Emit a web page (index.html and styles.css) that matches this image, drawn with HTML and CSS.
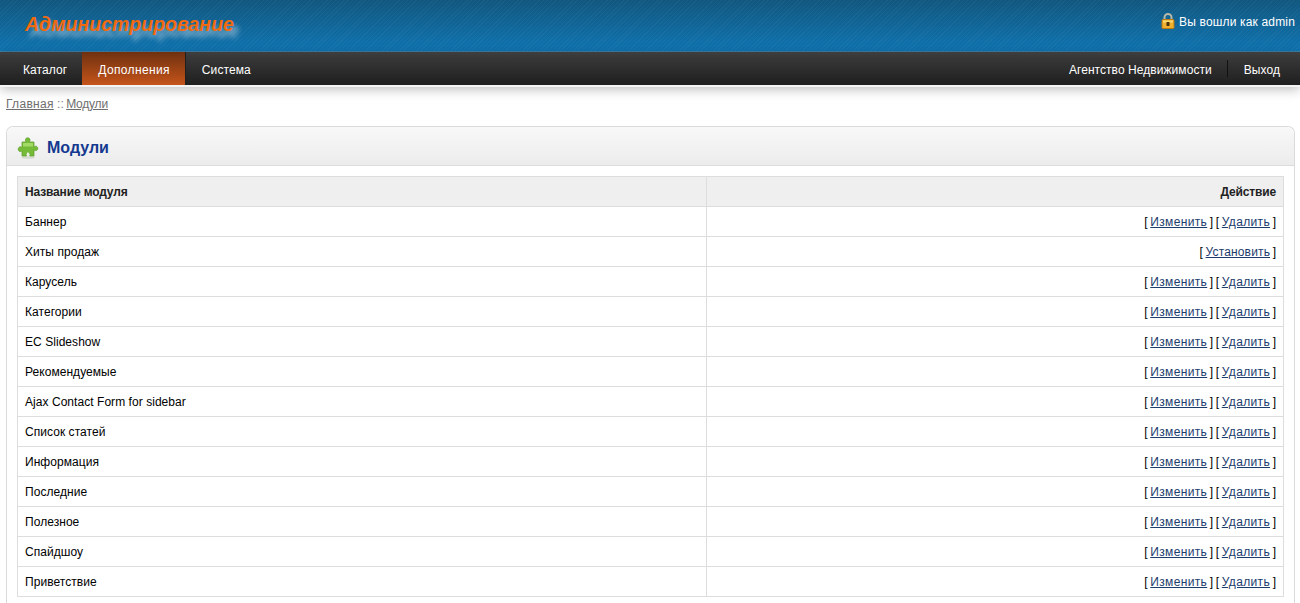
FILE: index.html
```html
<!DOCTYPE html>
<html lang="ru">
<head>
  <meta charset="UTF-8">
  <title>Модули</title>
  <link rel="stylesheet" href="styles.css">
</head>
<body>
  <div class="header">
    <div class="logo">Администрирование</div>
    <div class="logged">
      <svg class="lock" width="14" height="16" viewBox="0 0 14 16">
        <path d="M3.500 7V4.500a3.500 3.500 0 0 1 7 0V7" fill="none" stroke="#b9b9a8" stroke-width="2"/>
        <rect x="1" y="6.500" width="12" height="9" rx="1" fill="#f0b030" stroke="#b97a10"/>
        <rect x="2" y="7.500" width="10" height="2" fill="#f9d873"/>
        <rect x="5.500" y="9" width="3" height="4" fill="#4a3208"/>
      </svg>
      Вы вошли как admin
    </div>
  </div>

  <div class="menu">
    <ul class="menu-left">
      <li>Каталог</li>
      <li class="selected">Дополнения</li>
      <li>Система</li>
    </ul>
    <ul class="menu-right">
      <li>Агентство Недвижимости</li>
      <li>Выход</li>
    </ul>
  </div>

  <div class="content">
    <div class="breadcrumb"><a href="#">Главная</a> :: <a href="#">Модули</a></div>

    <div class="box">
      <div class="heading">
        <svg class="puzzle" width="22" height="22" viewBox="0 0 22 22">
          <ellipse cx="11" cy="20.500" rx="7" ry="1.300" fill="#d5dbd0"/>
          <path d="M5 5h3.800c.3 0-.4-.7-.4-1.800C8.400 1.500 9.500.8 10.700.8s2.300.7 2.300 2.400c0 1.100-.7 1.800-.4 1.800H17v4.600c0 .3.700-.4 1.700-.4 1.100 0 2.100.9 2.100 2.200s-1 2.200-2.100 2.200c-1 0-1.700-.7-1.700-.4V19h-4.300c-.3 0 .4-.6.400-1.500 0-1.100-.9-1.700-2-1.700s-2 .6-2 1.700c0 .9.700 1.500.4 1.500H5v-4.800c0-.3-.7.400-1.700.4C2.200 14.600 1.200 13.500 1.200 12.200s1-2.400 2.100-2.400c1 0 1.700.7 1.700.4z" fill="#75bb38" stroke="#5d9d2a" stroke-width=".7"/>
          <path d="M6 6h10v3.500H6z" fill="#a3da68"/>
          <path d="M10 15.500h1.600V19H10z" fill="#e8f3dc"/>
        </svg>
        <h1>Модули</h1>
      </div>
      <div class="box-content">
        <table class="list">
          <thead>
            <tr><th class="left">Название модуля</th><th class="right">Действие</th></tr>
          </thead>
          <tbody>
            <tr><td class="left">Баннер</td><td class="right">[ <a href="#">Изменить</a> ] [ <a href="#">Удалить</a> ]</td></tr>
            <tr><td class="left">Хиты продаж</td><td class="right">[ <a class="install" href="#">Установить</a> ]</td></tr>
            <tr><td class="left">Карусель</td><td class="right">[ <a href="#">Изменить</a> ] [ <a href="#">Удалить</a> ]</td></tr>
            <tr><td class="left">Категории</td><td class="right">[ <a href="#">Изменить</a> ] [ <a href="#">Удалить</a> ]</td></tr>
            <tr><td class="left">EC Slideshow</td><td class="right">[ <a href="#">Изменить</a> ] [ <a href="#">Удалить</a> ]</td></tr>
            <tr><td class="left">Рекомендуемые</td><td class="right">[ <a href="#">Изменить</a> ] [ <a href="#">Удалить</a> ]</td></tr>
            <tr><td class="left">Ajax Contact Form for sidebar</td><td class="right">[ <a href="#">Изменить</a> ] [ <a href="#">Удалить</a> ]</td></tr>
            <tr><td class="left">Список статей</td><td class="right">[ <a href="#">Изменить</a> ] [ <a href="#">Удалить</a> ]</td></tr>
            <tr><td class="left">Информация</td><td class="right">[ <a href="#">Изменить</a> ] [ <a href="#">Удалить</a> ]</td></tr>
            <tr><td class="left">Последние</td><td class="right">[ <a href="#">Изменить</a> ] [ <a href="#">Удалить</a> ]</td></tr>
            <tr><td class="left">Полезное</td><td class="right">[ <a href="#">Изменить</a> ] [ <a href="#">Удалить</a> ]</td></tr>
            <tr><td class="left">Спайдшоу</td><td class="right">[ <a href="#">Изменить</a> ] [ <a href="#">Удалить</a> ]</td></tr>
            <tr><td class="left">Приветствие</td><td class="right">[ <a href="#">Изменить</a> ] [ <a href="#">Удалить</a> ]</td></tr>
          </tbody>
        </table>
      </div>
    </div>
  </div>
</body>
</html>
```

FILE: styles.css
```css
html {
  overflow: hidden;
}

body {
  margin: 0;
  padding: 0;
  height: 603px;
  overflow: hidden;
  background: #fff;
  font-family: "Liberation Sans", Arial, sans-serif;
  font-size: 12px;
  color: #000;
}

.header {
  height: 52px;
  box-sizing: border-box;
  padding: 0 5px 0 25px;
  display: flex;
  align-items: center;
  justify-content: space-between;
  background:
    repeating-linear-gradient(135deg, rgba(255, 255, 255, 0.035) 0, rgba(255, 255, 255, 0.035) 1px, transparent 1px, transparent 3px),
    linear-gradient(to bottom, #11577f, #0f74b1);
  border-bottom: 1px solid #3f7fa6;
}

.logo {
  margin-top: -3px;
  font-size: 19.5px;
  font-weight: bold;
  font-style: italic;
  color: #f26a10;
  text-shadow: 5px 6px 5px rgba(255, 255, 255, 0.5);
}

.logged {
  margin-top: -8px;
  display: flex;
  align-items: center;
  gap: 4px;
  color: #fff;
  letter-spacing: 0.16px;
}

.lock {
  margin-top: -2px;
}

.menu {
  height: 33px;
  display: flex;
  justify-content: space-between;
  background: linear-gradient(to bottom, #3d3d3d 0, #3d3d3d 2px, #3a3a3a 3px, #1f1f1f 100%);
  border-bottom: 2px solid #f4f4f4;
  box-shadow: 0 2px 12px rgba(0, 0, 0, 0.28);
}

.menu ul {
  display: flex;
  margin: 0;
  padding: 0;
  list-style: none;
}

.menu .menu-left {
  padding-left: 7px;
}

.menu li {
  height: 33px;
  padding: 0 14px 0 16px;
  line-height: 36px;
  color: #fff;
  letter-spacing: 0.1px;
}

.menu li.selected {
  padding: 0 15px 0 16px;
  border-right: 1px solid #1f1f1f;
  background: linear-gradient(to bottom, #6f3110, #c5541a);
  letter-spacing: 0.35px;
}

.menu .menu-left li:first-child {
  padding-right: 15px;
}

.menu .menu-right li {
  padding: 0 16px;
  letter-spacing: 0.06px;
}

.menu .menu-right li:last-child {
  padding-right: 20px;
}

.menu-right li:first-child {
  position: relative;
}

.menu-right li:first-child::after {
  content: "";
  position: absolute;
  right: 0;
  top: 8px;
  bottom: 8px;
  width: 1px;
  background: #111;
}

.content {
  padding: 0 5px 0 6px;
}

.breadcrumb {
  margin-top: 9px;
  height: 30px;
  line-height: 16px;
  color: #7f7f7f;
}

.breadcrumb a {
  color: #6e6e6e;
  letter-spacing: 0.3px;
}

.breadcrumb a:last-child {
  margin-left: -1px;
  letter-spacing: -0.2px;
}

.box {
  border: 1px solid #dbdbdb;
  border-bottom: 0;
  border-radius: 7px 7px 0 0;
}

.heading {
  height: 39px;
  display: flex;
  align-items: center;
  gap: 7px;
  padding: 4px 0 0 10px;
  box-sizing: border-box;
  background: linear-gradient(to bottom, #f8f8f8, #ececec);
  border-bottom: 1px solid #dbdbdb;
  border-radius: 7px 7px 0 0;
}

.heading h1 {
  margin: 0 0 0 1px;
  font-size: 16px;
  font-weight: bold;
  color: #14398f;
}

.box-content {
  padding: 10px;
}

.list {
  width: 100%;
  border-collapse: collapse;
  table-layout: fixed;
}

.list th,
.list td {
  height: 29px;
  padding: 0 7px;
  border: 1px solid #dddddd;
  font-size: 12px;
}

.list td {
  letter-spacing: 0.05px;
}

.list th {
  background: #efefef;
  color: #222;
  letter-spacing: -0.15px;
}

.left {
  box-sizing: border-box;
  text-align: left;
  width: 689px;
}

.right {
  text-align: right;
}

.list td.right {
  letter-spacing: 0;
  word-spacing: -0.7px;
}

.list td a {
  color: #1b3c6d;
  letter-spacing: 0.35px;
}

.list td a.install {
  letter-spacing: 0.15px;
}
```
